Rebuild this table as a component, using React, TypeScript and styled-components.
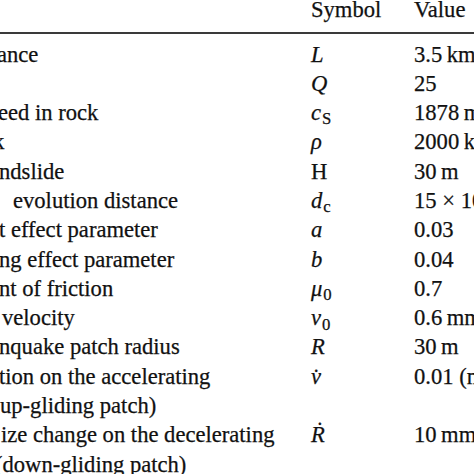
import React from 'react';
import styled, { createGlobalStyle } from 'styled-components';

const GlobalStyle = createGlobalStyle`
  html, body {
    margin: 0;
    padding: 0;
    background: #ffffff;
    overflow: hidden;
  }
`;

const Page = styled.div`
  width: 474px;
  height: 474px;
  overflow: hidden;
  background: #ffffff;
  color: #111111;
  font-family: 'Liberation Serif', 'Times New Roman', serif;
  font-size: 22.6px;
  -webkit-text-stroke: 0.25px #111111;
`;

const Row = styled.div`
  display: grid;
  grid-template-columns: 311px 103px 1fr;
  line-height: 29.3px;
  height: 29.3px;
  white-space: nowrap;
`;

const HeadRow = styled(Row)`
  margin-top: -4.6px;
`;

const Rule = styled.div`
  height: 2px;
  background: #3a3a3a;
  margin: 7.3px 0 5.5px 0;
`;

const Label = styled.div<{ $shift: number }>`
  margin-left: ${({ $shift }) => $shift}px;
`;

const Symbol = styled.div`
  font-style: italic;
`;

const Upright = styled.span`
  font-style: normal;
`;

const Sub = styled.span`
  font-style: normal;
  font-size: 0.74em;
  position: relative;
  top: 0.26em;
  margin-left: 1px;
`;

const Value = styled.div``;

type Param = {
  label: string;
  shift: number;
  symbol?: React.ReactNode;
  value?: string;
};

// labels are clipped on the left like the cropped source table
const params: Param[] = [
  { label: 'ance', shift: -3, symbol: 'L', value: '3.5\u2009km' },
  { label: '', shift: 0, symbol: 'Q', value: '25' },
  { label: 'eed in rock', shift: -2, symbol: <>c<Sub>S</Sub></>, value: '1878\u2009m\u2009s⁻¹' },
  { label: 'k', shift: -7, symbol: 'ρ', value: '2000\u2009kg\u2009m⁻³' },
  { label: 'ndslide', shift: -1, symbol: <Upright>H</Upright>, value: '30\u2009m' },
  { label: 'evolution distance', shift: 13, symbol: <>d<Sub>c</Sub></>, value: '15 × 10⁻⁶\u2009m' },
  { label: 't effect parameter', shift: -1, symbol: 'a', value: '0.03' },
  { label: 'ng effect parameter', shift: -1, symbol: 'b', value: '0.04' },
  { label: 'nt of friction', shift: -1, symbol: <>μ<Sub>0</Sub></>, value: '0.7' },
  { label: 'velocity', shift: 2, symbol: <>v<Sub>0</Sub></>, value: '0.6\u2009mm\u2009s⁻¹' },
  { label: 'nquake patch radius', shift: -1, symbol: 'R', value: '30\u2009m' },
  { label: 'tion on the accelerating', shift: -1, symbol: 'v\u0307', value: '0.01 (mm\u2009s⁻²)' },
  { label: 'up-gliding patch)', shift: 0 },
  { label: 'ize change on the decelerating', shift: 1, symbol: 'R\u0307', value: '10\u2009mm\u2009s⁻¹' },
  { label: '(down-gliding patch)', shift: -5 },
];

const App: React.FC = () => (
  <>
    <GlobalStyle />
    <Page>
      <HeadRow>
        <Label $shift={0} />
        <div>Symbol</div>
        <Value>Value</Value>
      </HeadRow>
      <Rule />
      {params.map((p, i) => (
        <Row key={i}>
          <Label $shift={p.shift}>{p.label}</Label>
          <Symbol>{p.symbol}</Symbol>
          <Value>{p.value}</Value>
        </Row>
      ))}
    </Page>
  </>
);

export default App;
